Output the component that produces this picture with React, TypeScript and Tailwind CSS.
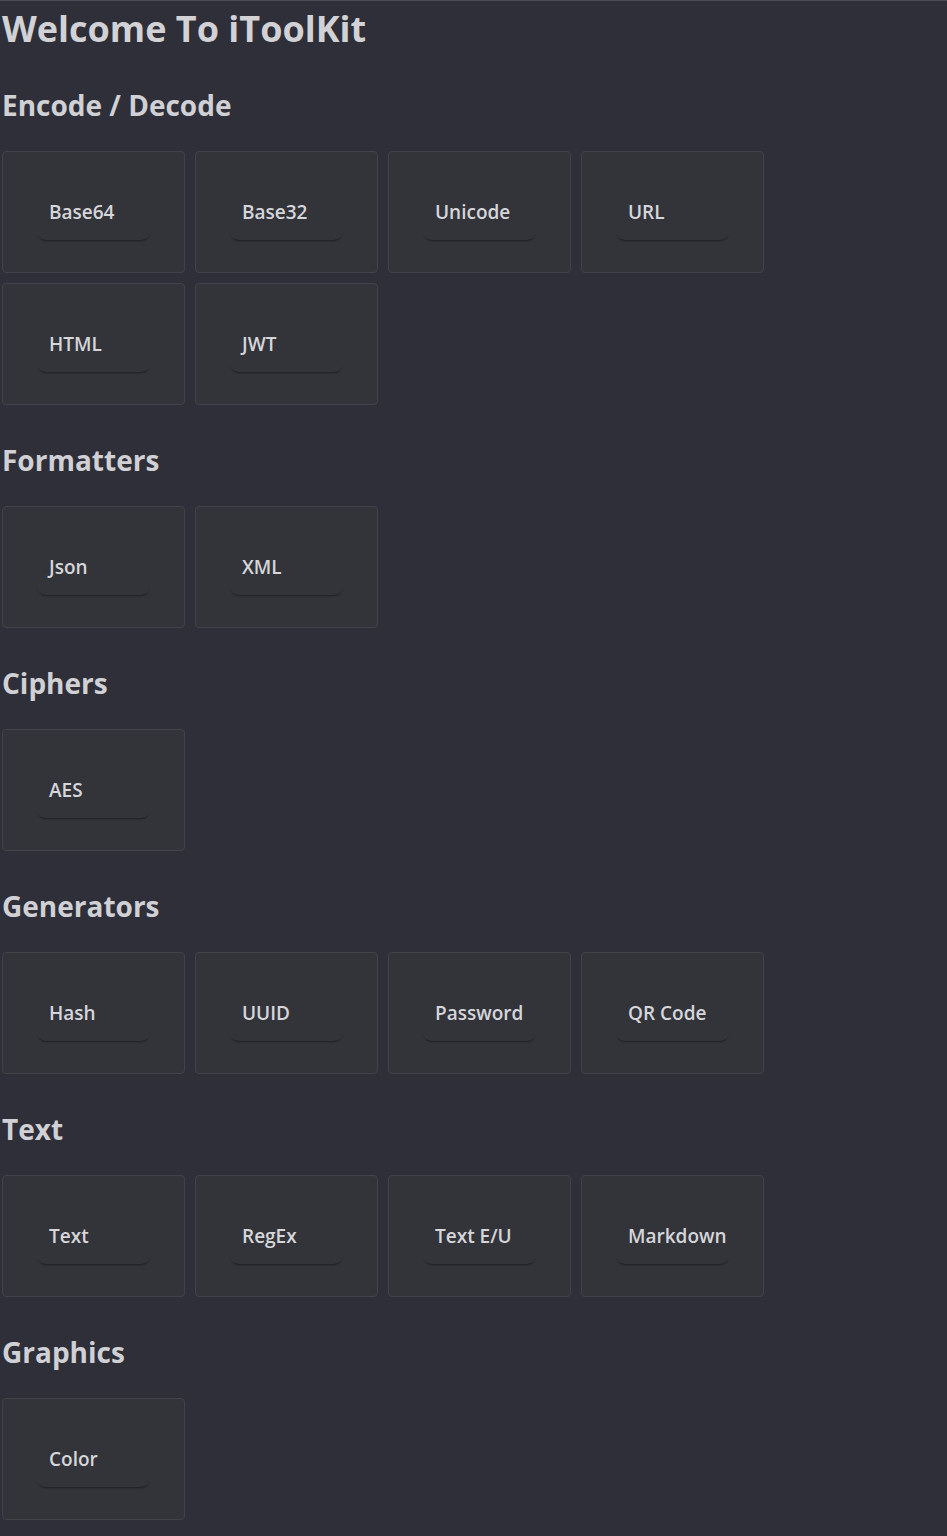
const sections = [
  { title: "Encode / Decode", tools: ["Base64", "Base32", "Unicode", "URL", "HTML", "JWT"] },
  { title: "Formatters", tools: ["Json", "XML"] },
  { title: "Ciphers", tools: ["AES"] },
  { title: "Generators", tools: ["Hash", "UUID", "Password", "QR Code"] },
  { title: "Text", tools: ["Text", "RegEx", "Text E/U", "Markdown"] },
  { title: "Graphics", tools: ["Color"] },
];

function ToolCard({ name }: { name: string }) {
  return (
    <div className="w-[183px] h-[122px] rounded-[4px] border border-[#41434b] bg-[#32343a] flex items-center justify-center">
      <div className="w-[115px] h-[56px] rounded-[10px] bg-[#32343a] shadow-[0_3px_2px_-2px_rgba(0,0,0,0.4)] flex items-center pl-[13px] text-[19px] font-semibold text-[#d6d6da]">
        {name}
      </div>
    </div>
  );
}

export default function App() {
  return (
    <div
      className="min-h-[1536px] bg-[#2e2f38] border-t border-[#4a4b54] pl-[2px] pb-10"
      style={{ fontFamily: '"Open Sans", "Noto Sans", sans-serif' }}
    >
      <h1 className="mt-[6px] text-[36px] leading-[43px] font-bold text-[#d2d2d6]">
        Welcome To iToolKit
      </h1>
      {sections.map((s) => (
        <section key={s.title}>
          <h2 className="mt-[34px] mb-[25px] text-[28px] leading-[42px] font-bold text-[#d0d0d5]">
            {s.title}
          </h2>
          <div className="grid grid-cols-[repeat(4,183px)] gap-[10px]">
            {s.tools.map((t) => (
              <ToolCard key={t} name={t} />
            ))}
          </div>
        </section>
      ))}
    </div>
  );
}
